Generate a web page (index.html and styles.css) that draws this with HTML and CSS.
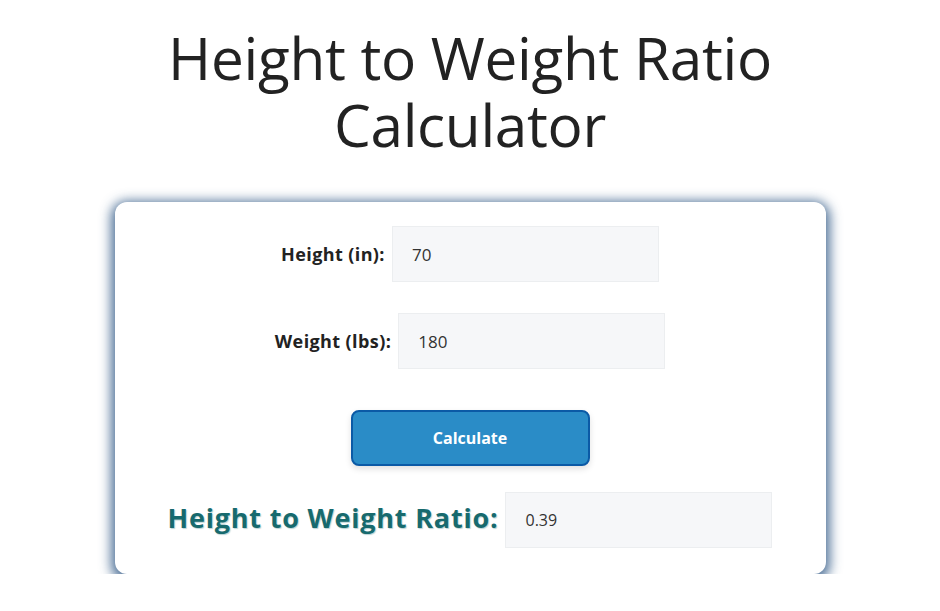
FILE: index.html
```
<!doctype html>
<html lang="en">
  <head>
    <meta charset="UTF-8" />
    <meta name="viewport" content="width=device-width, initial-scale=1.0" />
    <title>Height to Weight Ratio Calculator</title>
    <link rel="stylesheet" href="styles.css">
  </head>
  <body>
    <h1>Height to Weight Ratio Calculator</h1>

    <div class="calc-card">
      <div class="field-row">
        <label for="height">Height (in):</label>
        <input type="text" id="height" value="70" />
      </div>

      <div class="field-row">
        <label for="weight">Weight (lbs):</label>
        <input type="text" id="weight" value="180" />
      </div>

      <button class="calc-button" onclick="calculate()">Calculate</button>

      <div class="field-row result-row">
        <label for="ratio">Height to Weight Ratio:</label>
        <input type="text" id="ratio" value="0.39" readonly />
      </div>
    </div>

    <script>
      function calculate() {
        const h = parseFloat(document.getElementById('height').value);
        const w = parseFloat(document.getElementById('weight').value);
        if (!h || !w) return;
        document.getElementById('ratio').value = (h / w).toFixed(2);
      }
    </script>
  </body>
</html>
```

FILE: styles.css
```
* {
  margin: 0;
  padding: 0;
  box-sizing: border-box;
}

body {
  font-family: 'Open Sans', 'Noto Sans', sans-serif;
  background: #ffffff;
  color: #222;
  display: flex;
  flex-direction: column;
  align-items: center;
  padding-top: 24px;
}

h1 {
  font-size: 58.5px;
  font-weight: 400;
  line-height: 67px;
  text-align: center;
  color: #222;
  width: 700px;
  letter-spacing: -0.3px;
}

.calc-card {
  margin-top: 44px;
  width: 711px;
  background: #fff;
  border-radius: 12px;
  box-shadow: 0 3px 12px 4px rgba(50, 90, 135, 0.85);
  padding: 24px 0 26px;
  display: flex;
  flex-direction: column;
  align-items: center;
}

.field-row {
  display: flex;
  align-items: center;
  gap: 7px;
}

.field-row + .field-row {
  margin-top: 31px;
}

.field-row label {
  font-size: 18px;
  font-weight: 700;
  letter-spacing: 0.4px;
  color: #222;
}

.field-row input {
  width: 267px;
  height: 56px;
  padding: 0 19px;
  font-family: inherit;
  font-size: 17px;
  color: #333;
  background: #f6f7f9;
  border: 1px solid #eceef0;
  outline: none;
}

.calc-button {
  margin-top: 41px;
  width: 239px;
  height: 56px;
  background: #2a8cc7;
  color: #fff;
  font-family: inherit;
  font-size: 16px;
  font-weight: 700;
  border: 2px solid #0b5aa6;
  border-radius: 8px;
  box-shadow: 0 3px 6px rgba(0, 0, 0, 0.12);
  cursor: pointer;
}

.calc-button:hover {
  background: #2379ad;
}

.result-row {
  margin-top: 26px;
}

.result-row label {
  font-size: 27px;
  letter-spacing: 0.8px;
  color: #176a6e;
  text-shadow: 1px 1px 1px rgba(23, 106, 110, 0.3);
  padding-bottom: 6px;
}

.result-row input {
  font-size: 16px;
}
```
